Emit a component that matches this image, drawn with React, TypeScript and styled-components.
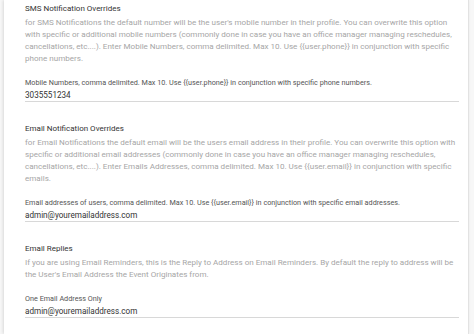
import styled, { createGlobalStyle } from 'styled-components';

const GlobalStyle = createGlobalStyle`
  html, body {
    margin: 0;
    padding: 0;
    background: #ececec;
    font-family: Roboto, 'Liberation Sans', Arial, sans-serif;
  }
`;

const Page = styled.div`
  width: 474px;
  height: 334px;
  overflow: hidden;
  display: flex;
  background: #f7f7f7;
`;

const Card = styled.div`
  margin-left: 4px;
  width: 465px;
  background: #fff;
  border-right: 1px solid #e2e2e2;
  box-shadow: -1px 0 3px rgba(0, 0, 0, 0.12);
  padding: 3px 9px 0 21px;
  box-sizing: border-box;
  display: flex;
  flex-direction: column;
  gap: 21px;
`;

const Section = styled.section`
  display: flex;
  flex-direction: column;
`;

const Title = styled.div`
  font-size: 8px;
  line-height: 12px;
  color: #333;
  margin-bottom: 2px;
`;

const Description = styled.div`
  font-size: 8.07px;
  line-height: 12px;
  color: #a6a6a6;
`;

const Field = styled.div`
  display: flex;
  flex-direction: column;
  margin-top: 13px;
  border-bottom: 1px solid #d8d8d8;
`;

const Label = styled.div`
  font-size: 7.25px;
  line-height: 10px;
  color: #555;
  margin-bottom: 1px;
`;

const Value = styled.div`
  font-size: 8.15px;
  line-height: 12px;
  color: #333;
`;

const sections = [
  {
    title: 'SMS Notification Overrides',
    desc:
      "for SMS Notifications the default number will be the user's mobile number in their profile. You can overwrite this option with specific or additional mobile numbers (commonly done in case you have an office manager managing reschedules, cancellations, etc....). Enter Mobile Numbers, comma delimited. Max 10. Use {{user.phone}} in conjunction with specific phone numbers.",
    label:
      'Mobile Numbers, comma delimited. Max 10. Use {{user.phone}} in conjunction with specific phone numbers.',
    value: '3035551234',
  },
  {
    title: 'Email Notification Overrides',
    desc:
      'for Email Notifications the default email will be the users email address in their profile. You can overwrite this option with specific or additional email addresses (commonly done in case you have an office manager managing reschedules, cancellations, etc....). Enter Emails Addresses, comma delimited. Max 10. Use {{user.email}} in conjunction with specific emails.',
    label:
      'Email addresses of users, comma delimited. Max 10. Use {{user.email}} in conjunction with specific email addresses.',
    value: 'admin@youremailaddress.com',
  },
  {
    title: 'Email Replies',
    desc:
      "If you are using Email Reminders, this is the Reply to Address on Email Reminders. By default the reply to address will be the User's Email Address the Event Originates from.",
    label: 'One Email Address Only',
    value: 'admin@youremailaddress.com',
  },
];

export default function App() {
  return (
    <>
      <GlobalStyle />
      <Page>
        <Card>
          {sections.map((s) => (
            <Section key={s.title}>
              <Title>{s.title}</Title>
              <Description>{s.desc}</Description>
              <Field>
                <Label>{s.label}</Label>
                <Value>{s.value}</Value>
              </Field>
            </Section>
          ))}
        </Card>
      </Page>
    </>
  );
}
